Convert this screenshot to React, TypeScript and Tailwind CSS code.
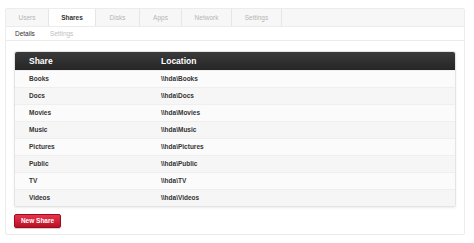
const tabs = ["Users", "Shares", "Disks", "Apps", "Network", "Settings"];
const tabWidths = ["w-[43px]", "w-[47px]", "w-[44px]", "w-[42px]", "w-[50px]", "w-[50px]"];

const shares = [
  { name: "Books", location: "\\\\hda\\Books" },
  { name: "Docs", location: "\\\\hda\\Docs" },
  { name: "Movies", location: "\\\\hda\\Movies" },
  { name: "Music", location: "\\\\hda\\Music" },
  { name: "Pictures", location: "\\\\hda\\Pictures" },
  { name: "Public", location: "\\\\hda\\Public" },
  { name: "TV", location: "\\\\hda\\TV" },
  { name: "Videos", location: "\\\\hda\\Videos" },
];

export default function App() {
  return (
    <div className="w-[474px] h-[243px] bg-white pt-[8px] pl-[5px] font-['Liberation_Sans',Arial,sans-serif]">
      <div className="w-[460px] h-[227px] border border-[#ececec] rounded-[2px] flex flex-col">
        {/* main tabs */}
        <div className="flex h-[18px] bg-[#f7f7f7] border-b border-[#ececec]">
          {tabs.map((t, i) => (
            <div
              key={t}
              className={`${tabWidths[i]} flex items-center justify-center border-r border-[#e6e6e6] text-[6.5px] ${
                t === "Shares" ? "bg-white text-[#333] font-bold" : "text-[#b5b5b5]"
              }`}
            >
              {t}
            </div>
          ))}
        </div>
        {/* sub tabs */}
        <div className="flex items-center h-[14px] border-b border-[#ececec] pl-[9px] gap-[15px] text-[6.5px]">
          <span className="text-[#333]">Details</span>
          <span className="text-[#c0c0c0]">Settings</span>
        </div>
        <div className="px-[8px] pt-[10px]">
          <div className="border border-[#e4e4e4] rounded-[2px] shadow-[0_1px_2px_rgba(0,0,0,0.08)]">
            <div className="flex items-center h-[18px] bg-gradient-to-b from-[#3a3a3a] to-[#262626] text-white font-bold text-[8.5px] rounded-t-[2px]">
              <div className="w-[146px] pl-[14px]">Share</div>
              <div>Location</div>
            </div>
            {shares.map((s, i) => (
              <div
                key={s.name}
                className={`flex items-center h-[17px] border-t border-[#efefef] text-[6.5px] font-bold text-[#333333] ${
                  i % 2 === 0 ? "bg-[#fbfbfb]" : "bg-[#f6f6f6]"
                }`}
              >
                <div className="w-[146px] pl-[14px]">{s.name}</div>
                <div>{s.location}</div>
              </div>
            ))}
          </div>
          <button className="mt-[7px] w-[47px] h-[14px] rounded-[2px] border border-[#9e0b1f] bg-gradient-to-b from-[#e8334a] to-[#b80f26] text-white font-bold text-[6.5px] flex items-center justify-center shadow-[0_1px_1px_rgba(0,0,0,0.2)]">
            New Share
          </button>
        </div>
      </div>
    </div>
  );
}
